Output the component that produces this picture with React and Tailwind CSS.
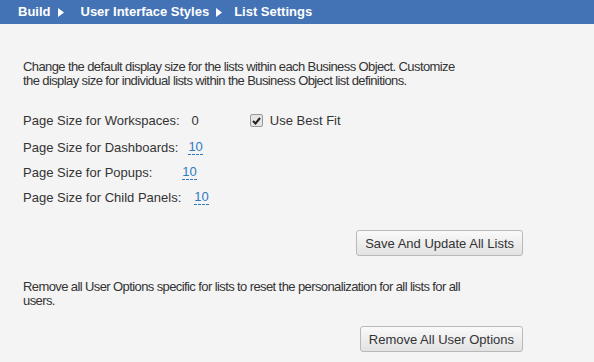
import React from "react";

const rows = [
  { label: "Page Size for Workspaces:", value: "0", link: false, gap: "ml-[12px]" },
  { label: "Page Size for Dashboards:", value: "10", link: true, gap: "ml-[10px]" },
  { label: "Page Size for Popups:", value: "10", link: true, gap: "ml-[30px]" },
  { label: "Page Size for Child Panels:", value: "10", link: true, gap: "ml-[13px]" },
];

const Arrow = () => (
  <svg width="6" height="9" viewBox="0 0 6 9" className="mx-[7px] fill-white">
    <path d="M0 0 L6 4.5 L0 9 Z" />
  </svg>
);

const Button = ({ children }) => (
  <button className="h-[26px] px-[8px] rounded-[3px] border border-[#b9b9b9] bg-gradient-to-b from-[#fafafa] to-[#e2e2e2] text-[13px] text-[#333]">
    {children}
  </button>
);

const App = () => {
  return (
    <div className="w-[594px] h-[362px] bg-[#f4f4f4] font-['Liberation_Sans',Arial,sans-serif] text-[#333] overflow-hidden">
      <div className="h-[24px] bg-[#4473b5] flex items-center pl-[18px] text-white font-bold text-[13px]">
        <span>Build</span>
        <Arrow />
        <span className="ml-[10px]">User Interface Styles</span>
        <Arrow />
        <span className="ml-[5px]">List Settings</span>
      </div>
      <div className="px-[23px] pt-[36px] text-[13px] leading-[15px]">
        <p className="w-[445px] tracking-[-0.6px] leading-[14px]">
          Change the default display size for the lists within each Business Object. Customize
          the display size for individual lists within the Business Object list definitions.
        </p>
        <div className="mt-[25px] flex flex-col gap-[10px]">
          {rows.map((row, index) => (
            <div key={index} className={`flex items-center h-[15px] ${index === 0 ? "mb-[2px]" : ""}`}>
              <span>{row.label}</span>
              <span
                className={`${row.gap} ${row.link ? "text-[#2d7bbd] border-b border-dashed border-[#2d7bbd] leading-[14px]" : ""}`}
              >
                {row.value}
              </span>
              {index === 0 && (
                <div className="flex items-center ml-[51px]">
                  <div className="w-[13px] h-[13px] rounded-[2px] border border-[#9a9a9a] bg-[#e4e4e4] flex items-center justify-center">
                    <svg width="9" height="8" viewBox="0 0 9 8">
                      <path d="M1 4 L3.5 6.5 L8 1" stroke="#222" strokeWidth="2" fill="none" />
                    </svg>
                  </div>
                  <span className="ml-[7px]">Use Best Fit</span>
                </div>
              )}
            </div>
          ))}
        </div>
        <div className="flex justify-end mt-[25px] pr-[48px]">
          <Button>Save And Update All Lists</Button>
        </div>
        <p className="mt-[24px] w-[445px] tracking-[-0.6px] leading-[14px]">
          Remove all User Options specific for lists to reset the personalization for all lists for all
          users.
        </p>
        <div className="flex justify-end mt-[18px] pr-[48px]">
          <Button>Remove All User Options</Button>
        </div>
      </div>
    </div>
  );
};

export default App;
